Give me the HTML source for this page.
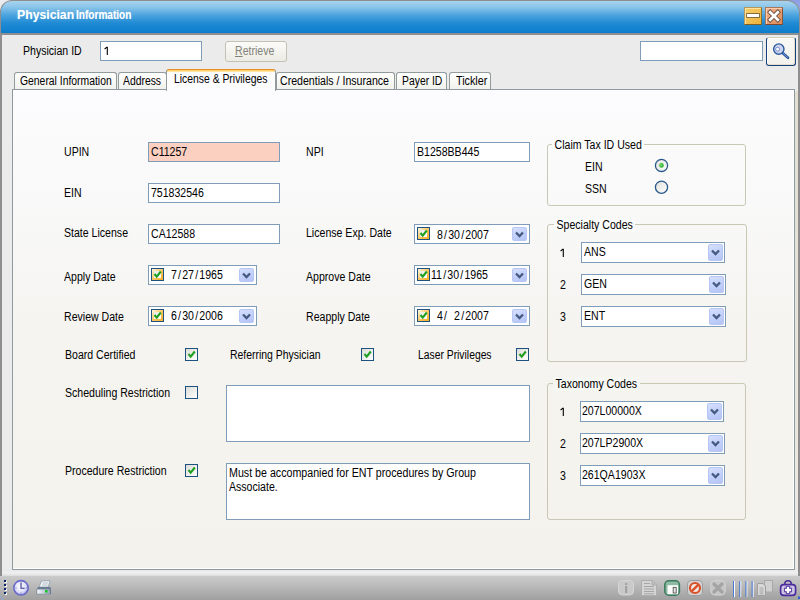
<!DOCTYPE html>
<html><head><meta charset="utf-8">
<style>
html,body{margin:0;padding:0;}
body{width:800px;height:600px;overflow:hidden;background:#f4f3fb;position:relative;font-family:"Liberation Sans",sans-serif;font-size:12.5px;color:#000;}
.a{position:absolute;}
.t{position:absolute;white-space:nowrap;transform:scaleX(.845);transform-origin:0 0;line-height:14px;}
#win{left:0;top:0;width:800px;height:600px;background:#8e8e8e;border-radius:12px 13px 0 0;overflow:hidden;}
#title{left:1px;top:1px;width:798px;height:32px;border-radius:11px 12px 0 0;background:linear-gradient(#a9d4ee 0%,#8cc6ea 18%,#4aa3de 45%,#1f8ad4 70%,#0c7dcc 100%);}
.ttl{top:8px;color:#fff;font-weight:bold;font-size:12px;text-shadow:0 0 1px rgba(255,255,255,.4);}
#content{left:2px;top:35px;width:796px;height:541px;background:#ebebeb;}
.inp{position:absolute;background:#fff;border:1px solid #7f9db9;box-sizing:border-box;}
.btn{position:absolute;box-sizing:border-box;border:1px solid #c3c1b2;border-radius:3px;background:linear-gradient(#fbfbf9,#ecebe4);}
.tab{position:absolute;box-sizing:border-box;top:72px;height:19px;border:1px solid #919b9c;border-bottom:none;border-radius:3px 3px 0 0;background:linear-gradient(#ffffff,#f0f0ea);}
#panel{left:12px;top:89px;width:783px;height:481px;box-sizing:border-box;border:1px solid #8e9a9f;background:linear-gradient(#fcfcfe 0%,#f9f9f9 22%,#f5f4f0 50%,#f3f2ec 100%);box-shadow:inset -1px -1px 0 #fff;}
.t i{font-style:normal;margin:0 1.45px;}
.grp{position:absolute;box-sizing:border-box;border:1px solid #c8c8b5;border-radius:3px;}
.gl{position:absolute;white-space:nowrap;transform:scaleX(.845);transform-origin:0 0;line-height:14px;background:#f7f7f5;padding:0 3px;}
.dd{position:absolute;box-sizing:border-box;width:15px;height:17px;border-radius:2px;border:1px solid #b7c6f5;background:linear-gradient(160deg,#d6e0fd,#c3d0fa 50%,#b4c4f5);}
.dd svg{position:absolute;left:2px;top:4px;}
.dd.s{height:14px;}
.dd.s svg{top:3px;}
.cb{position:absolute;box-sizing:border-box;width:13px;height:13px;border:1px solid #1c5180;background:linear-gradient(135deg,#dcdcd7,#ffffff);}
.cb.o{border-color:#1c5180;background:linear-gradient(135deg,#fff0cf 10%,#fbc761 50%,#f8b330 90%);}
.cb.o::before{content:"";position:absolute;left:2px;top:2px;right:2px;bottom:2px;background:linear-gradient(135deg,#e8e8e3,#fff);}
.cb svg{position:absolute;left:1px;top:1px;}
#status{left:0;top:576px;width:800px;height:24px;background:linear-gradient(#cbcbcb,#b6b6b6 50%,#a0a0a0);}
</style></head><body>
<div class="a" style="left:0;top:0;width:20px;height:20px;background:#ececf0;"></div><div class="a" style="left:780px;top:0;width:20px;height:20px;background:linear-gradient(#8c9fe6,#a3b4f0);"></div>
<div id="win" class="a">
 <div id="title" class="a"></div>
 <div class="t ttl" style="left:17px;transform:scaleX(1.02);">Physician</div><div class="t ttl" style="left:76px;transform:scaleX(.84);">Information</div>
 <!-- min / close -->
 <div class="a" style="left:744px;top:7px;width:18px;height:18px;box-sizing:border-box;background:linear-gradient(135deg,#f8cf6a,#eeb23c);border:1px solid;border-color:#b59a5a #8a6e2c #7e6220 #b59a5a;box-shadow:inset 1px 1px 0 #fbe2a0;"></div>
 <div class="a" style="left:747px;top:14px;width:12px;height:3px;background:#fff;box-shadow:0 0 0 .8px #6a5a38;"></div>
 <div class="a" style="left:765px;top:7px;width:18px;height:18px;box-sizing:border-box;background:linear-gradient(135deg,#f4b088,#dd8a58);border:1px solid;border-color:#a8785a #84553a #7a4a2e #a8785a;box-shadow:inset 1px 1px 0 #f9cdb2;"></div>
 <svg class="a" style="left:765px;top:7px" width="18" height="18"><path d="M5.2 5.2 L12.8 12.8 M12.8 5.2 L5.2 12.8" stroke="#5a4638" stroke-width="4.4" stroke-linecap="square"/><path d="M5.2 5.2 L12.8 12.8 M12.8 5.2 L5.2 12.8" stroke="#fff" stroke-width="2.8" stroke-linecap="square"/></svg>

 <div id="content" class="a"></div>
 <!-- top row -->
 <div class="t" style="left:23px;top:43.5px;">Physician ID</div>
 <div class="inp" style="left:100px;top:41px;width:102px;height:20px;"></div>
 <svg class="a" style="left:103.8px;top:45.7px" width="6" height="10"><path d="M0.6 3 L3.3 0.9 V9" fill="none" stroke="#000" stroke-width="1.1" stroke-linejoin="bevel"/></svg>
 <div class="btn" style="left:225px;top:41px;width:62px;height:21px;"></div>
 <div class="t" style="left:235px;top:44px;color:#828278;"><u>R</u>etrieve</div>
 <div class="inp" style="left:640px;top:41px;width:123px;height:20px;"></div>
 <div class="a" style="left:766px;top:37px;width:30px;height:29px;box-sizing:border-box;border:1px solid #17407e;border-top-color:#d6cfba;border-radius:3px;background:linear-gradient(#f8f8f5,#f3f2ec);box-shadow:inset -1px -1px 0 #e4ddc8, inset 1px 1px 0 #fdfdfb;"></div>
 <svg class="a" style="left:770px;top:41px" width="22" height="22"><circle cx="8.8" cy="8.1" r="5.2" fill="#cfd4ee" stroke="#2a5aa0" stroke-width="1.4"/><circle cx="7.6" cy="8.2" r="2" fill="#dfe4f6" stroke="#5a7cc0" stroke-width=".7"/><circle cx="7.6" cy="8.2" r="1.1" fill="#fff"/><path d="M12.9 12.2 L18 16.8" stroke="#2a5aa0" stroke-width="2.7" stroke-linecap="round"/><path d="M13.4 12.6 L17.6 16.4" stroke="#7a9ad6" stroke-width=".9" stroke-linecap="round"/></svg>

 <!-- tabs -->
 <div class="tab" style="left:14px;width:103px;"></div><div class="t" style="left:20px;top:74px;transform:scaleX(.83);">General Information</div>
 <div class="tab" style="left:118px;width:49px;"></div><div class="t" style="left:123px;top:74px;transform:scaleX(.83);">Address</div>
 <div class="tab" style="left:276px;width:119px;"></div><div class="t" style="left:280px;top:74px;transform:scaleX(.848);">Credentials / Insurance</div>
 <div class="tab" style="left:396px;width:51px;"></div><div class="t" style="left:402px;top:74px;transform:scaleX(.83);">Payer ID</div>
 <div class="tab" style="left:449px;width:42px;"></div><div class="t" style="left:455.5px;top:74px;transform:scaleX(.86);">Tickler</div>
 <div class="a" style="left:795px;top:91px;width:3px;height:480px;background:linear-gradient(#e2dfd2,#ebeae5);"></div>
 <div id="panel" class="a"></div>
 <div class="tab" style="left:166px;top:69px;width:110px;height:22px;background:linear-gradient(#ffc94a 0,#ffd77a 1px,#fdfdfe 2.5px,#fcfcfe 100%);border-top:1px solid #e68f2f;border-color:#e68f2f #919b9c #919b9c #919b9c;"></div>
 <div class="t" style="left:174px;top:72px;transform:scaleX(.83);">License &amp; Privileges</div>

 <!-- left column -->
 <div class="t" style="left:64px;top:145px;">UPIN</div>
 <div class="inp" style="left:148px;top:142px;width:132px;height:20px;background:#fcd0c1;"></div><div class="t" style="left:150.5px;top:145px;">C11257</div>
 <div class="t" style="left:64px;top:186px;">EIN</div>
 <div class="inp" style="left:148px;top:183px;width:132px;height:20px;"></div><div class="t" style="left:150.5px;top:186px;">751832546</div>
 <div class="t" style="left:64px;top:226px;">State License</div>
 <div class="inp" style="left:148px;top:224px;width:132px;height:20px;"></div><div class="t" style="left:150.5px;top:227px;">CA12588</div>
 <div class="t" style="left:64px;top:270px;">Apply Date</div>
 <div class="inp" style="left:148px;top:265px;width:109px;height:20px;"></div><div class="cb o" style="left:151px;top:268px;"><svg width="9" height="9"><path d="M1.5 4 L3.7 6.6 L7.8 1.5" fill="none" stroke="#1f9f1f" stroke-width="2.1"/></svg></div><div class="t" style="left:171px;top:268px;">7<i>/</i>27<i>/</i>1965</div><div class="dd s" style="left:239px;top:268px;"><svg width="9" height="7"><path d="M1 1.5 L4.5 5 L8 1.5" fill="none" stroke="#465a80" stroke-width="2.3"/></svg></div>
 <div class="t" style="left:64px;top:310px;">Review Date</div>
 <div class="inp" style="left:148px;top:306px;width:109px;height:20px;"></div><div class="cb o" style="left:151px;top:309px;"><svg width="9" height="9"><path d="M1.5 4 L3.7 6.6 L7.8 1.5" fill="none" stroke="#1f9f1f" stroke-width="2.1"/></svg></div><div class="t" style="left:171px;top:309px;">6<i>/</i>30<i>/</i>2006</div><div class="dd s" style="left:239px;top:309px;"><svg width="9" height="7"><path d="M1 1.5 L4.5 5 L8 1.5" fill="none" stroke="#465a80" stroke-width="2.3"/></svg></div>

 <!-- middle column -->
 <div class="t" style="left:306px;top:145px;">NPI</div>
 <div class="inp" style="left:414px;top:142px;width:116px;height:20px;"></div><div class="t" style="left:417px;top:145px;">B1258BB445</div>
 <div class="t" style="left:306px;top:226px;">License Exp. Date</div>
 <div class="inp" style="left:414px;top:224px;width:116px;height:20px;"></div><div class="cb o" style="left:417px;top:227px;"><svg width="9" height="9"><path d="M1.5 4 L3.7 6.6 L7.8 1.5" fill="none" stroke="#1f9f1f" stroke-width="2.1"/></svg></div><div class="t" style="left:437px;top:228px;">8<i>/</i>30<i>/</i>2007</div><div class="dd s" style="left:512px;top:227px;"><svg width="9" height="7"><path d="M1 1.5 L4.5 5 L8 1.5" fill="none" stroke="#465a80" stroke-width="2.3"/></svg></div>
 <div class="t" style="left:306px;top:270px;">Approve Date</div>
 <div class="inp" style="left:414px;top:265px;width:116px;height:20px;"></div><div class="cb o" style="left:417px;top:268px;"><svg width="9" height="9"><path d="M1.5 4 L3.7 6.6 L7.8 1.5" fill="none" stroke="#1f9f1f" stroke-width="2.1"/></svg></div><div class="t" style="left:431px;top:268px;">11<i>/</i>30<i>/</i>1965</div><div class="dd s" style="left:512px;top:268px;"><svg width="9" height="7"><path d="M1 1.5 L4.5 5 L8 1.5" fill="none" stroke="#465a80" stroke-width="2.3"/></svg></div>
 <div class="t" style="left:306px;top:310px;">Reapply Date</div>
 <div class="inp" style="left:414px;top:306px;width:116px;height:20px;"></div><div class="cb o" style="left:417px;top:309px;"><svg width="9" height="9"><path d="M1.5 4 L3.7 6.6 L7.8 1.5" fill="none" stroke="#1f9f1f" stroke-width="2.1"/></svg></div><div class="t" style="left:437px;top:309px;">4<i>/</i>&nbsp; 2<i>/</i>2007</div><div class="dd s" style="left:512px;top:309px;"><svg width="9" height="7"><path d="M1 1.5 L4.5 5 L8 1.5" fill="none" stroke="#465a80" stroke-width="2.3"/></svg></div>

 <!-- checkbox rows -->
 <div class="t" style="left:65px;top:348px;">Board Certified</div>
 <div class="cb" style="left:185px;top:348px;"><svg width="9" height="9"><path d="M1.5 4 L3.7 6.6 L7.8 1.5" fill="none" stroke="#1f9f1f" stroke-width="2.1"/></svg></div>
 <div class="t" style="left:230px;top:348px;transform:scaleX(.835);">Referring Physician</div>
 <div class="cb" style="left:361px;top:348px;"><svg width="9" height="9"><path d="M1.5 4 L3.7 6.6 L7.8 1.5" fill="none" stroke="#1f9f1f" stroke-width="2.1"/></svg></div>
 <div class="t" style="left:418px;top:348px;transform:scaleX(.827);">Laser Privileges</div>
 <div class="cb" style="left:516px;top:348px;"><svg width="9" height="9"><path d="M1.5 4 L3.7 6.6 L7.8 1.5" fill="none" stroke="#1f9f1f" stroke-width="2.1"/></svg></div>

 <div class="t" style="left:65px;top:386px;">Scheduling Restriction</div>
 <div class="cb" style="left:185px;top:386px;"></div>
 <div class="inp" style="left:226px;top:385px;width:304px;height:57px;"></div>

 <div class="t" style="left:65px;top:464px;">Procedure Restriction</div>
 <div class="cb" style="left:185px;top:464px;"><svg width="9" height="9"><path d="M1.5 4 L3.7 6.6 L7.8 1.5" fill="none" stroke="#1f9f1f" stroke-width="2.1"/></svg></div>
 <div class="inp" style="left:226px;top:463px;width:304px;height:57px;"></div>
 <div class="t" style="left:229px;top:466px;transform:scaleX(.853);">Must be accompanied for ENT procedures by Group</div>
 <div class="t" style="left:229px;top:480px;">Associate.</div>

 <!-- group boxes -->
 <div class="grp" style="left:547px;top:144px;width:199px;height:62px;"></div>
 <div class="gl" style="left:552px;top:138px;background:#fbfbfc;">Claim Tax ID Used</div>
 <div class="t" style="left:585px;top:160px;">EIN</div>
 <div class="t" style="left:585px;top:182px;">SSN</div>
 <svg class="a" style="left:654px;top:158px" width="16" height="16"><defs><linearGradient id="rg" x1="0" y1="0" x2="1" y2="1"><stop offset="0" stop-color="#deded8"/><stop offset="1" stop-color="#ffffff"/></linearGradient></defs><circle cx="7.5" cy="7.4" r="6.1" fill="url(#rg)" stroke="#2a5a8c" stroke-width="1.3"/><circle cx="7.5" cy="7.4" r="2.3" fill="#3cba3c"/><circle cx="7.1" cy="7" r="1" fill="#7ade6a"/></svg>
 <svg class="a" style="left:654px;top:180px" width="16" height="16"><circle cx="7.5" cy="7.2" r="6.1" fill="url(#rg)" stroke="#2a5a8c" stroke-width="1.3"/></svg>

 <div class="grp" style="left:547px;top:224px;width:200px;height:138px;"></div>
 <div class="gl" style="left:554px;top:218px;background:#fafafa;">Specialty Codes</div>
 <svg class="a" style="left:559.6px;top:247.9px" width="6" height="10"><path d="M0.6 3 L3.3 0.9 V9" fill="none" stroke="#000" stroke-width="1.1" stroke-linejoin="bevel"/></svg><div class="inp" style="left:581px;top:242px;width:144px;height:21px;"></div><div class="t" style="left:584px;top:245px;">ANS</div><div class="dd" style="left:708px;top:244px;"><svg width="9" height="7"><path d="M1 1.5 L4.5 5 L8 1.5" fill="none" stroke="#465a80" stroke-width="2.3"/></svg></div>
 <div class="t" style="left:560px;top:278px;">2</div><div class="inp" style="left:581px;top:274px;width:145px;height:21px;"></div><div class="t" style="left:584px;top:277px;">GEN</div><div class="dd" style="left:709px;top:276px;"><svg width="9" height="7"><path d="M1 1.5 L4.5 5 L8 1.5" fill="none" stroke="#465a80" stroke-width="2.3"/></svg></div>
 <div class="t" style="left:560px;top:310px;">3</div><div class="inp" style="left:581px;top:306px;width:145px;height:21px;"></div><div class="t" style="left:584px;top:309px;">ENT</div><div class="dd" style="left:709px;top:308px;"><svg width="9" height="7"><path d="M1 1.5 L4.5 5 L8 1.5" fill="none" stroke="#465a80" stroke-width="2.3"/></svg></div>

 <div class="grp" style="left:547px;top:383px;width:199px;height:137px;"></div>
 <div class="gl" style="left:553px;top:377px;background:#f6f6f3;">Taxonomy Codes</div>
 <svg class="a" style="left:559.6px;top:407px" width="6" height="10"><path d="M0.6 3 L3.3 0.9 V9" fill="none" stroke="#000" stroke-width="1.1" stroke-linejoin="bevel"/></svg><div class="inp" style="left:580px;top:401px;width:144px;height:21px;"></div><div class="t" style="left:582px;top:404px;">207L00000X</div><div class="dd" style="left:707px;top:403px;"><svg width="9" height="7"><path d="M1 1.5 L4.5 5 L8 1.5" fill="none" stroke="#465a80" stroke-width="2.3"/></svg></div>
 <div class="t" style="left:560px;top:437px;">2</div><div class="inp" style="left:580px;top:433px;width:145px;height:21px;"></div><div class="t" style="left:582px;top:436px;">207LP2900X</div><div class="dd" style="left:708px;top:435px;"><svg width="9" height="7"><path d="M1 1.5 L4.5 5 L8 1.5" fill="none" stroke="#465a80" stroke-width="2.3"/></svg></div>
 <div class="t" style="left:560px;top:469px;">3</div><div class="inp" style="left:580px;top:465px;width:145px;height:21px;"></div><div class="t" style="left:582px;top:468px;">261QA1903X</div><div class="dd" style="left:708px;top:467px;"><svg width="9" height="7"><path d="M1 1.5 L4.5 5 L8 1.5" fill="none" stroke="#465a80" stroke-width="2.3"/></svg></div>

 <!-- status bar -->
 <div id="status" class="a"></div>
 <div class="a" style="left:2px;top:570px;width:796px;height:6px;background:linear-gradient(#e9e9e9,#efefef 50%,#dcdcdc);"></div>
 <svg class="a" style="left:0;top:576px" width="800" height="24" viewBox="0 576 800 24">
  <defs>
   <radialGradient id="ck" cx="45%" cy="40%" r="60%"><stop offset="0" stop-color="#ffffff"/><stop offset=".6" stop-color="#e2e2fa"/><stop offset="1" stop-color="#b4b4e6"/></radialGradient>
   <linearGradient id="pf" x1="0" x2="1"><stop offset="0" stop-color="#f4f6fa"/><stop offset="1" stop-color="#9aa8b8"/></linearGradient>
  </defs>
  <!-- grip -->
  <g fill="#fff"><rect x="5" y="581" width="2" height="2"/><rect x="5" y="585" width="2" height="2"/><rect x="5" y="589" width="2" height="2"/><rect x="5" y="593" width="2" height="2"/></g>
  <g fill="#0a246a"><rect x="4" y="580" width="2" height="2"/><rect x="4" y="584" width="2" height="2"/><rect x="4" y="588" width="2" height="2"/><rect x="4" y="592" width="2" height="2"/></g>
  <!-- clock -->
  <circle cx="21" cy="587.8" r="7.2" fill="url(#ck)" stroke="#6a6aca" stroke-width="1.6"/>
  <path d="M21 582.6 V588.2 H24.6" fill="none" stroke="#34348a" stroke-width="1.1"/>
  <g fill="#7a7ad0"><rect x="20.5" y="592.6" width="1" height="1.2"/><rect x="15.4" y="587.4" width="1.2" height="1"/><rect x="25.6" y="587.4" width="1.2" height="1"/></g>
  <!-- printer -->
  <path d="M41.6 580.8 H50.2 L48.2 587 H39.2 Z" fill="#f8f9fb" stroke="#8a98a8" stroke-width=".8"/>
  <path d="M42.5 583 H48.3 M42 585 H47.6" stroke="#a8b2c0" stroke-width=".9"/>
  <path d="M38 587 H50.5 L51 589 V594.2 H36.6 V589.5 Z" fill="#6a7c92"/>
  <rect x="37.2" y="589.4" width="12.6" height="4.4" fill="url(#pf)"/>
  <rect x="45" y="590" width="2.6" height="2.6" fill="#18c828"/>
  <!-- i -->
  <rect x="618.5" y="580.5" width="15" height="14.5" rx="4" fill="#c9c9c9" stroke="#d6d6d6" stroke-width="1"/>
  <rect x="625" y="583" width="2.2" height="2" fill="#a2a2a2"/><rect x="625" y="586" width="2.2" height="7" fill="#a2a2a2"/>
  <!-- doc -->
  <path d="M641.5 580.5 H652 L656.5 585 V595.5 H641.5 Z" fill="#d4d4d4" stroke="#aeaeae" stroke-width="1"/>
  <path d="M652 580.5 V585 H656.5" fill="#bcbcbc" stroke="#aeaeae" stroke-width="1"/>
  <path d="M644 583.5 H650 M644 586.5 H654 M644 589 H654 M644 591.5 H654 M644 593.8 H654" stroke="#a6a6a6" stroke-width="1"/>
  <!-- green -->
  <rect x="664.8" y="580.8" width="14.6" height="14.4" rx="4" fill="#8fbaa4" stroke="#3a7a5c" stroke-width="1.5"/>
  <rect x="667.5" y="585.2" width="10.6" height="9" fill="#fbfbfb"/>
  <rect x="673.2" y="587.4" width="3" height="5.6" fill="#e8e8e8" stroke="#555" stroke-width=".9"/>
  <!-- no -->
  <rect x="687.5" y="580.5" width="15" height="15" rx="3.5" fill="#d2d2d2" stroke="#9e9e9e" stroke-width="1"/>
  <circle cx="695" cy="588" r="5" fill="#f2e8e2" stroke="#d8522c" stroke-width="2.2"/>
  <path d="M698.4 584.6 L691.6 591.4" stroke="#d8522c" stroke-width="2.4"/>
  <!-- x -->
  <rect x="710.8" y="580.5" width="14.4" height="14.5" rx="4" fill="#c6c6c6" stroke="#d2d2d2" stroke-width="1"/>
  <path d="M714 584 L722 592 M722 584 L714 592" stroke="#a4a4a4" stroke-width="3.2" stroke-linecap="round"/>
  <!-- blue lines -->
  <g fill="#fff"><rect x="734" y="581" width="1" height="16"/><rect x="740.2" y="581" width="1" height="16"/><rect x="746.4" y="581" width="1" height="16"/><rect x="752.6" y="581" width="1" height="16"/></g>
  <g fill="#4878d8"><rect x="733" y="581" width="1" height="16"/><rect x="739.2" y="581" width="1" height="16"/><rect x="745.4" y="581" width="1" height="16"/><rect x="751.6" y="581" width="1" height="16"/></g>
  <!-- copy -->
  <path d="M764.5 580.5 H772.5 V592 H764.5 Z" fill="#d0d0d0" stroke="#a8a8a8" stroke-width="1"/>
  <path d="M757.5 583.5 H763 L765.5 586 V595.5 H757.5 Z" fill="#d8d8d8" stroke="#a0a0a0" stroke-width="1"/>
  <path d="M759.5 588 H763.5 M759.5 590 H763.5 M759.5 592 H763.5 M759.5 593.8 H763.5" stroke="#a0a0a0" stroke-width=".9"/>
  <!-- medkit -->
  <path d="M784.6 584.6 C784.6 579.4 791.4 579.4 791.4 584.6" fill="none" stroke="#4a2a9c" stroke-width="1.6"/>
  <rect x="780.6" y="584.6" width="15" height="10.8" rx="3.2" fill="#cbc4e0" stroke="#4a2a9c" stroke-width="1.6"/>
  <path d="M788 586.2 V593.8 M784.2 590 H791.8" stroke="#4a2a9c" stroke-width="4.4"/>
  <path d="M788 587 V593 M785 590 H791" stroke="#ffffff" stroke-width="2.4"/>
  <!-- corner hints -->
  <path d="M0 596 Q1.5 597.5 3 600" fill="none" stroke="#8aa8e8" stroke-width="1"/>
  <rect x="798" y="596.5" width="2" height="2.5" fill="#3060d0"/>
 </svg>
</div>
</body></html>
